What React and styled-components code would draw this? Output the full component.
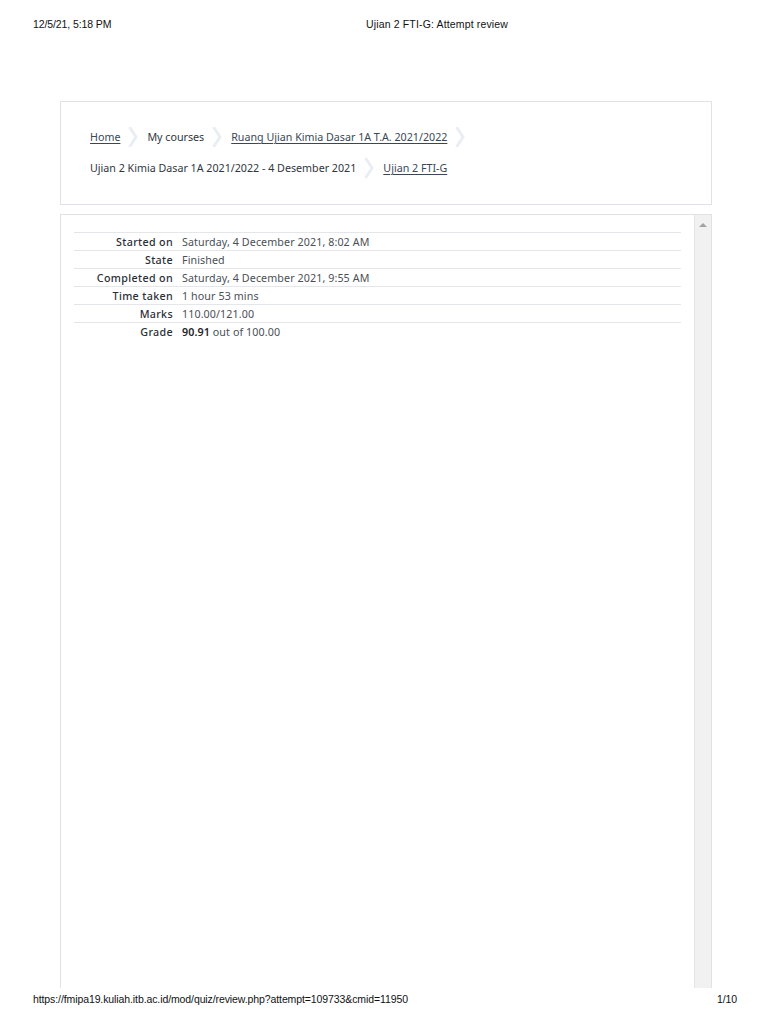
import React from "react";
import styled, { createGlobalStyle } from "styled-components";

const Global = createGlobalStyle`
  html, body { margin: 0; padding: 0; background: #fff; }
  body { width: 768px; height: 1024px; overflow: hidden; }
`;

const Page = styled.div`
  width: 768px;
  height: 1024px;
  display: flex;
  flex-direction: column;
  font-family: "Liberation Sans", Arial, sans-serif;
`;

const PrintBar = styled.div`
  display: grid;
  grid-template-columns: 333px 1fr auto;
  padding: 0 31px 0 33px;
  height: 13px;
  margin-top: ${(p) => p.$top || 0}px;
  font-size: 10.5px;
  line-height: 13px;
  color: #111;
  letter-spacing: -0.1px;
`;

const Title = styled.span`
  letter-spacing: 0.15px;
`;

const BreadBox = styled.nav`
  margin: 70px 56px 0 60px;
  height: 104px;
  box-sizing: border-box;
  border: 1px solid #dfe3e8;
  padding: 25px 0 0 29px;
  display: flex;
  flex-direction: column;
  gap: 11px;
  font-family: "Noto Sans", sans-serif;
  font-size: 10.7px;
  letter-spacing: 0px;
`;

const Crumbs = styled.div`
  display: flex;
  align-items: center;
  height: 20px;
`;

const Crumb = styled.span`
  color: ${(p) => (p.$link ? "#394756" : "#2f3640")};
  text-decoration: ${(p) => (p.$link ? "underline" : "none")};
  text-underline-offset: 2px;
  white-space: nowrap;
`;

const Sep = styled.svg`
  width: 27px;
  height: 20px;
  flex: none;
`;

const Chevron = () => (
  <Sep viewBox="0 0 27 20">
    <path d="M9.5 0 L16 10 L9.5 20" fill="none" stroke="#e9eef5" strokeWidth="3" />
  </Sep>
);

const ContentBox = styled.section`
  margin: 9px 56px 0 60px;
  height: 774px;
  box-sizing: border-box;
  border: 1px solid #dfe3e8;
  border-bottom: none;
  display: flex;
`;

const Inner = styled.div`
  flex: 1;
  padding: 17px 13px 0 13px;
`;

const Scrollbar = styled.div`
  width: 17px;
  flex: none;
  background: #f1f1f1;
  border-left: 1px solid #e6e6e6;
  display: flex;
  justify-content: center;
  padding-top: 8px;
  box-sizing: border-box;
`;

const UpArrow = styled.div`
  width: 0;
  height: 0;
  border-left: 4px solid transparent;
  border-right: 4px solid transparent;
  border-bottom: 4px solid #a3a3a3;
`;

const Table = styled.table`
  width: 100%;
  border-collapse: collapse;
  font-family: "Noto Sans", sans-serif;
  font-size: 10.7px;
  letter-spacing: 0.1px;
`;

const Row = styled.tr`
  height: 18px;
  border-top: 1px solid #e4e7ea;
`;

const Label = styled.th`
  width: 99px;
  padding: 0 9px 0 0;
  text-align: right;
  font-weight: 500;
  color: #2a2f36;
  white-space: nowrap;
  letter-spacing: 0.35px;
`;

const Value = styled.td`
  padding: 0;
  color: #4a4f56;
  white-space: nowrap;
`;

const Strong = styled.b`
  font-weight: 600;
  color: #1f242a;
`;

const rows = [
  ["Started on", "Saturday, 4 December 2021, 8:02 AM"],
  ["State", "Finished"],
  ["Completed on", "Saturday, 4 December 2021, 9:55 AM"],
  ["Time taken", "1 hour 53 mins"],
  ["Marks", "110.00/121.00"],
];

export default function App() {
  return (
    <Page>
      <Global />
      <PrintBar $top={18}>
        <span>12/5/21, 5:18 PM</span>
        <Title>Ujian 2 FTI-G: Attempt review</Title>
        <span></span>
      </PrintBar>
      <BreadBox>
        <Crumbs>
          <Crumb $link>Home</Crumb>
          <Chevron />
          <Crumb>My courses</Crumb>
          <Chevron />
          <Crumb $link>Ruang Ujian Kimia Dasar 1A T.A. 2021/2022</Crumb>
          <Chevron />
        </Crumbs>
        <Crumbs>
          <Crumb>Ujian 2 Kimia Dasar 1A 2021/2022 - 4 Desember 2021</Crumb>
          <Chevron />
          <Crumb $link>Ujian 2 FTI-G</Crumb>
        </Crumbs>
      </BreadBox>
      <ContentBox>
        <Inner>
          <Table>
            <tbody>
              {rows.map(([k, v]) => (
                <Row key={k}>
                  <Label>{k}</Label>
                  <Value>{v}</Value>
                </Row>
              ))}
              <Row>
                <Label>Grade</Label>
                <Value>
                  <Strong>90.91</Strong> out of 100.00
                </Value>
              </Row>
            </tbody>
          </Table>
        </Inner>
        <Scrollbar>
          <UpArrow />
        </Scrollbar>
      </ContentBox>
      <PrintBar $top={5}>
        <span style={{ gridColumn: "1 / 3" }}>
          https://fmipa19.kuliah.itb.ac.id/mod/quiz/review.php?attempt=109733&amp;cmid=11950
        </span>
        <span>1/10</span>
      </PrintBar>
    </Page>
  );
}
